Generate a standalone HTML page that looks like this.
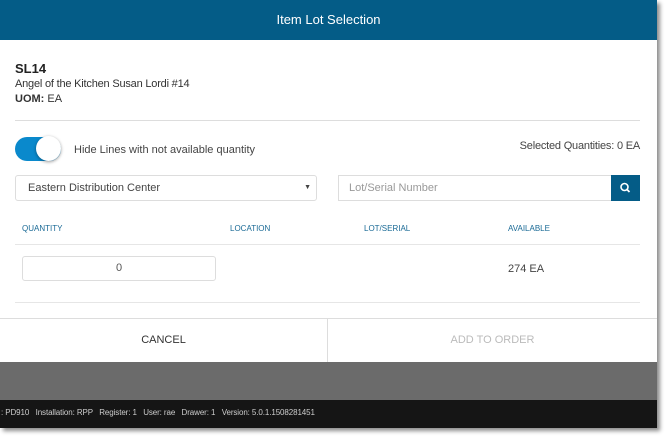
<!DOCTYPE html>
<html><head><style>
*{margin:0;padding:0;box-sizing:border-box}
body{width:670px;height:442px;background:#fff;position:relative;overflow:hidden;font-family:"Liberation Sans",sans-serif;color:#333}
.a{position:absolute}
</style></head><body>
<div class="a" style="left:0;top:0;width:657px;height:428px;box-shadow:3px 3px 4px rgba(0,0,0,.45);background:#fff"></div>
<div class="a" style="left:0;top:0;width:657px;height:40px;background:#045c87;color:#fff;font-size:13px;text-align:center;line-height:40px">Item Lot Selection</div>
<div class="a" style="left:15px;top:61px;font-size:13px;font-weight:bold;color:#222">SL14</div>
<div class="a" style="left:15px;top:78px;font-size:11px;letter-spacing:-0.2px">Angel of the Kitchen Susan Lordi #14</div>
<div class="a" style="left:15px;top:93px;font-size:11px"><b>UOM:</b> EA</div>
<div class="a" style="left:15px;top:120px;width:625px;height:1px;background:#ddd"></div>
<div class="a" style="left:15px;top:137px;width:46px;height:24px;border-radius:12px;background:#0a89cc"></div>
<div class="a" style="left:36px;top:136px;width:25px;height:25px;border-radius:50%;background:#fff;box-shadow:0 1px 3px rgba(0,0,0,.4)"></div>
<div class="a" style="left:74px;top:144px;font-size:11px;color:#444">Hide Lines with not available quantity</div>
<div class="a" style="right:30px;top:140px;font-size:11px;color:#444;letter-spacing:-0.2px">Selected Quantities: 0 EA</div>
<div class="a" style="left:15px;top:175px;width:302px;height:26px;border:1px solid #ddd;border-radius:3px;font-size:11px;line-height:24px;padding-left:12px;color:#444">Eastern Distribution Center<span style="position:absolute;right:5px;font-size:7px">▼</span></div>
<div class="a" style="left:338px;top:175px;width:274px;height:26px;border:1px solid #ddd;font-size:11px;line-height:24px;padding-left:10px;color:#999">Lot/Serial Number</div>
<div class="a" style="left:611px;top:175px;width:29px;height:26px;background:#045c87"><svg width="29" height="26"><circle cx="13.5" cy="12" r="3.5" fill="none" stroke="#fff" stroke-width="1.6"/><line x1="16" y1="14.5" x2="18.5" y2="17" stroke="#fff" stroke-width="1.8"/></svg></div>
<div class="a" style="left:22px;top:224px;font-size:8px;color:#1a6a96">QUANTITY</div>
<div class="a" style="left:230px;top:224px;font-size:8px;color:#1a6a96">LOCATION</div>
<div class="a" style="left:364px;top:224px;font-size:8px;color:#1a6a96">LOT/SERIAL</div>
<div class="a" style="left:508px;top:224px;font-size:8px;color:#1a6a96">AVAILABLE</div>
<div class="a" style="left:15px;top:244px;width:625px;height:1px;background:#e6e6e6"></div>
<div class="a" style="left:22px;top:256px;width:194px;height:25px;border:1px solid #ddd;border-radius:3px;text-align:center;font-size:11px;line-height:23px;color:#555">0</div>
<div class="a" style="left:508px;top:263px;font-size:11px;color:#444">274 EA</div>
<div class="a" style="left:15px;top:302px;width:625px;height:1px;background:#e6e6e6"></div>
<div class="a" style="left:0;top:318px;width:657px;height:1px;background:#ddd"></div>
<div class="a" style="left:327px;top:318px;width:1px;height:44px;background:#ddd"></div>
<div class="a" style="left:0;top:334px;width:327px;text-align:center;font-size:11px;color:#333">CANCEL</div>
<div class="a" style="left:328px;top:334px;width:329px;text-align:center;font-size:11px;color:#bbb">ADD TO ORDER</div>
<div class="a" style="left:0;top:362px;width:657px;height:38px;background:#6b6b6b"></div>
<div class="a" style="left:0;top:400px;width:657px;height:28px;background:#151515;color:#ccc;font-size:8px;line-height:26px;padding-left:1px;white-space:nowrap;letter-spacing:-0.1px">: PD910 &nbsp; Installation: RPP &nbsp; Register: 1 &nbsp; User: rae &nbsp; Drawer: 1 &nbsp; Version: 5.0.1.1508281451</div>
</body></html>
